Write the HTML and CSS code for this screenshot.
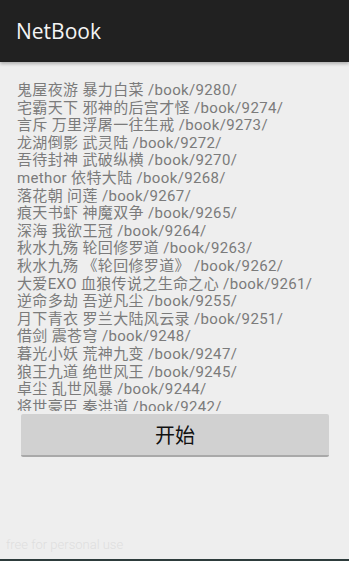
FILE: index.html
```html
<!DOCTYPE html>
<html lang="zh-CN">
<head>
    <meta charset="UTF-8">
    <meta name="viewport" content="width=device-width, initial-scale=1.0">
    <title>NetBook</title>
    <link rel="stylesheet" href="styles.css">
</head>
<body>
    <div class="app">
        <div class="action-bar">NetBook</div>
        <div class="book-list">
            <div>鬼屋夜游 暴力白菜 /book/9280/</div>
            <div>宅霸天下 邪神的后宫才怪 /book/9274/</div>
            <div>言斥 万里浮屠一往生戒 /book/9273/</div>
            <div>龙湖倒影 武灵陆 /book/9272/</div>
            <div>吾待封神 武破纵横 /book/9270/</div>
            <div>methor 依特大陆 /book/9268/</div>
            <div>落花朝 问莲 /book/9267/</div>
            <div>痕天书虾 神魔双争 /book/9265/</div>
            <div>深海 我欲王冠 /book/9264/</div>
            <div>秋水九殇 轮回修罗道 /book/9263/</div>
            <div>秋水九殇 《轮回修罗道》 /book/9262/</div>
            <div>大爱EXO 血狼传说之生命之心 /book/9261/</div>
            <div>逆命多劫 吾逆凡尘 /book/9255/</div>
            <div>月下青衣 罗兰大陆风云录 /book/9251/</div>
            <div>借剑 震苍穹 /book/9248/</div>
            <div>暮光小妖 荒神九变 /book/9247/</div>
            <div>狼王九道 绝世风王 /book/9245/</div>
            <div>卓尘 乱世风暴 /book/9244/</div>
            <div>将世豪臣 秦洪道 /book/9242/</div>
        </div>
        <button class="start-btn">开始</button>
        <div class="watermark">free for personal use</div>
        <div class="bottom-edge"></div>
    </div>
</body>
</html>
```

FILE: styles.css
```css
body {
    margin: 0;
    background-color: #eeeeee;
    font-family: Roboto, "Noto Sans CJK SC", sans-serif;
}
.app {
    height: 561px;
    display: flex;
    flex-direction: column;
    overflow: hidden;
}
.action-bar {
    height: 62px;
    flex-shrink: 0;
    background-color: #212121;
    color: #f4f4f4;
    font-family: "Open Sans", sans-serif;
    font-size: 21px;
    line-height: 62px;
    padding-left: 16px;
    box-shadow: 0 2px 3px rgba(0, 0, 0, 0.25);
}
.book-list {
    margin-top: 20px;
    height: 329px;
    flex-shrink: 0;
    overflow: hidden;
    padding-left: 17px;
    color: #7b7b7b;
    font-size: 15px;
    letter-spacing: 0.35px;
    line-height: 17.6px;
    white-space: nowrap;
}
.start-btn {
    margin: 3px 20px 0 21px;
    height: 43px;
    flex-shrink: 0;
    background-color: #d1d1d1;
    border: none;
    border-bottom: 2px solid #a9a9a9;
    border-radius: 2px;
    font-family: Roboto, "Noto Sans CJK SC", sans-serif;
    font-size: 20px;
    color: #111;
    padding: 0;
}
.watermark {
    margin-top: auto;
    padding-left: 6px;
    font-size: 13px;
    font-weight: 300;
    color: #dedede;
    line-height: 16px;
    margin-bottom: 6px;
}
.bottom-edge {
    height: 2px;
    background-color: #2d3b3b;
    flex-shrink: 0;
}
```
